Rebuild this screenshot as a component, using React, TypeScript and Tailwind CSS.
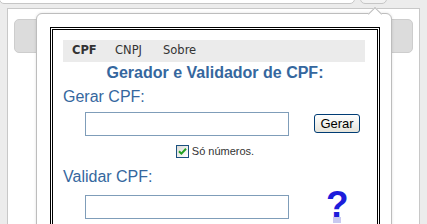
import React from "react";

const arial = { fontFamily: '"Liberation Sans", Arial, sans-serif' };
const dejavu = { fontFamily: '"DejaVu Sans", Verdana, sans-serif' };

function Checkbox() {
  return (
    <div className="w-[13px] h-[13px] border border-[#1c5180] bg-gradient-to-br from-[#dcdcd7] to-white flex items-center justify-center">
      <svg width="9" height="9" viewBox="0 0 9 9">
        <path d="M1 4.2 L3.4 6.6 L8 1.8" fill="none" stroke="#21a121" strokeWidth="2" />
      </svg>
    </div>
  );
}

export default function App() {
  return (
    <div className="relative w-[427px] h-[224px] overflow-hidden bg-[#ececec]" style={arial}>
      {/* top toolbar remnants */}
      <div className="flex gap-[5px] h-[4px] items-end">
        <div className="w-[356px] h-[10px] bg-white border border-[#c6c6c6] rounded-b-[5px] -ml-[1px]" />
        <div className="w-[27px] h-[10px] bg-[#f2f2f2] border border-[#c6c6c6] rounded-b-[5px]" />
      </div>

      {/* underlying panel */}
      <div className="mt-[4px] ml-[7px] w-[413px] h-[216px] bg-white border border-b-0 border-[#c8c8c8] pt-[10px] pl-[6px]">
        <div className="w-[399px] h-[34px] rounded-[5px] bg-[#dcdcdc] border border-[#cdcdcd]" />
      </div>

      {/* popup bubble */}
      <div className="absolute left-[36px] top-[13px] w-[356px] h-[230px] bg-white border border-[#bdbdbd] rounded-[6px] shadow-[0_0_3px_rgba(0,0,0,0.12)] pl-[13px] pt-[13px]">
        <div className="absolute left-[333px] top-[-5px] w-[10px] h-[10px] bg-white border-l border-t border-[#bdbdbd] rotate-45" />

        <div className="relative w-[330px] h-[220px] border-[3px] border-double border-black p-[10px]">
          {/* tabs */}
          <div className="flex items-center h-[22px] w-[302px] bg-[#ebebeb] pl-[9px] text-[11.5px] text-[#333]" style={dejavu}>
            <span className="w-[43px] font-bold">CPF</span>
            <span className="w-[48px]">CNPJ</span>
            <span>Sobre</span>
          </div>

          <div className="mt-[2px] text-center text-[16px] leading-[18px] font-bold text-[#35679e]">
            Gerador e Validador de CPF:
          </div>

          <div className="mt-[6px] text-[16px] leading-[18px] text-[#35679e]">Gerar CPF:</div>

          <div className="mt-[6px] flex items-start">
            <div className="ml-[22px] w-[204px] h-[24px] border border-[#7f9db9] bg-white" />
            <button className="ml-[25px] mt-[2px] w-[46px] h-[19px] rounded-[3px] border border-[#003c74] bg-gradient-to-b from-white to-[#e6e4da] text-[13px] leading-[15px] text-black">
              Gerar
            </button>
          </div>

          <div className="mt-[9px] flex items-center justify-center gap-[3px] h-[13px]">
            <Checkbox />
            <span className="text-[11px] leading-[13px] text-[#333]">Só números.</span>
          </div>

          <div className="mt-[10px] text-[16px] leading-[18px] text-[#35679e]">Validar CPF:</div>

          <div className="mt-[9px] flex items-start">
            <div className="ml-[22px] w-[204px] h-[24px] border border-[#7f9db9] bg-white" />
            <div className="ml-[37px] -mt-[9px] flex flex-col items-center">
              <span className="text-[37px] leading-none font-bold text-[#1d1ddb]">?</span>
              <span className="-mt-[6px] w-[8px] h-[6px] bg-[#c9c9f0]" />
            </div>
          </div>
        </div>
      </div>
    </div>
  );
}
